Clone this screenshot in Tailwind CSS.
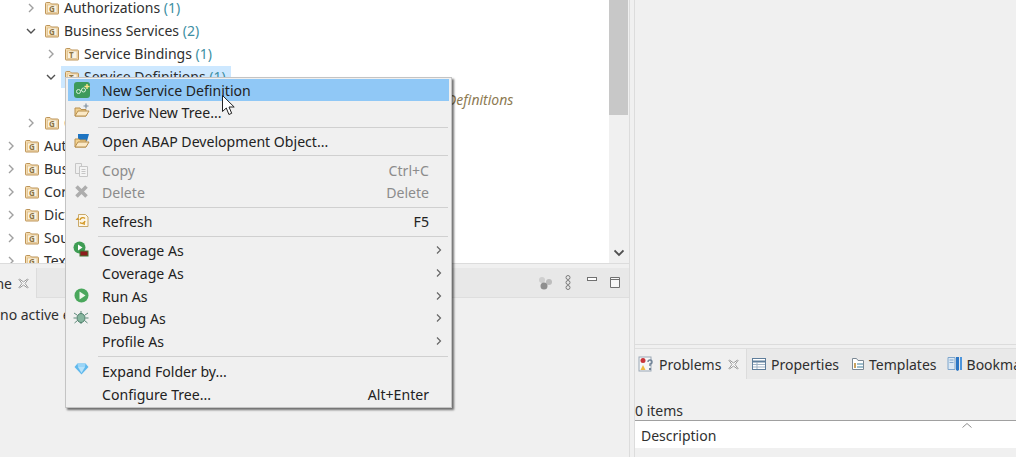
<!doctype html>
<html>
<head>
<meta charset="utf-8">
<script src="https://cdn.jsdelivr.net/npm/@tailwindcss/browser@4"></script>
</head>
<body class="m-0 overflow-hidden">
<svg width="0" height="0" class="absolute">
  <defs>
    <symbol id="f" viewBox="0 0 14 14">
      <path d="M.5 12.500V2.500q0-1 1-1h3.500l1.500 1.500h6q1 0 1 1v8.500q0 .5-.5.500H1q-.5 0-.5-.5z" fill="#f5dcae" stroke="#bd955a"/>
      <rect x="2.500" y="4" width="9.500" height="7.500" fill="#fbf3e2" stroke="#d6b581" stroke-width=".6"/>
    </symbol>
    <symbol id="cr" viewBox="0 0 10 10"><path d="M3 1l4 4-4 4" fill="none" stroke="#a0a0a0" stroke-width="1.400"/></symbol>
    <symbol id="cd" viewBox="0 0 10 10"><path d="M1 3l4 4 4-4" fill="none" stroke="#505050" stroke-width="1.400"/></symbol>
    <symbol id="m" viewBox="0 0 8 10"><path d="M2 1.500l3.500 3.500L2 8.500" fill="none" stroke="#666" stroke-width="1.200"/></symbol>
    <symbol id="x" viewBox="0 0 11 11"><path d="M1.500 1l4 3 4-3 .5.500-3 4 3 4-.5.500-4-3-4 3-.5-.5 3-4-3-4z" fill="#fff" stroke="#808080" stroke-width=".8"/></symbol>
  </defs>
</svg>
<div class="relative flex w-[1016px] h-[457px] overflow-hidden bg-[#f0f0f0] text-[14px] leading-[23px] text-[#2f2f2f] font-['Noto_Sans','Open_Sans',sans-serif]">

  <!-- left column -->
  <div class="w-[630px] shrink-0 h-full flex flex-col border-r border-[#dcdcdc]">
    <div class="flex h-[264px] shrink-0 border-b border-[#dcdcdc]">
      <div class="w-[609px] h-full bg-white overflow-hidden">
        <div class="-mt-[4px]">
          <div class="flex items-center h-[23px] pl-[26px]"><svg class="w-[10px] h-[10px] mr-[9px]"><use href="#cr"/></svg><span class="relative w-[14px] h-[14px] mr-[5px]"><svg class="w-[14px] h-[14px]"><use href="#f"/></svg><span class="absolute left-[4px] top-[3px] text-[8px] leading-[9px] font-bold text-[#8c7443]">G</span></span><span>Authorizations <span class="text-[#3d8fa3]">(1)</span></span></div>
          <div class="flex items-center h-[23px] pl-[26px]"><svg class="w-[10px] h-[10px] mr-[9px]"><use href="#cd"/></svg><span class="relative w-[14px] h-[14px] mr-[5px]"><svg class="w-[14px] h-[14px]"><use href="#f"/></svg><span class="absolute left-[4px] top-[3px] text-[8px] leading-[9px] font-bold text-[#8c7443]">G</span></span><span>Business Services <span class="text-[#3d8fa3]">(2)</span></span></div>
          <div class="flex items-center h-[23px] pl-[46px]"><svg class="w-[10px] h-[10px] mr-[9px]"><use href="#cr"/></svg><span class="relative w-[14px] h-[14px] mr-[5px]"><svg class="w-[14px] h-[14px]"><use href="#f"/></svg><span class="absolute left-[4px] top-[3px] text-[8px] leading-[9px] font-bold text-[#8c7443]">T</span></span><span>Service Bindings <span class="text-[#3d8fa3]">(1)</span></span></div>
          <div class="flex items-center h-[23px] pl-[46px]"><svg class="w-[10px] h-[10px] mr-[5px]"><use href="#cd"/></svg><span class="flex items-center h-[22px] w-[170px] bg-[#cde8ff] pl-[4px]"><span class="relative w-[14px] h-[14px] mr-[5px]"><svg class="w-[14px] h-[14px]"><use href="#f"/></svg><span class="absolute left-[4px] top-[3px] text-[8px] leading-[9px] font-bold text-[#8c7443]">T</span></span><span>Service Definitions <span class="text-[#3d8fa3]">(1)</span></span></span></div>
          <div class="flex items-center h-[23px] pl-[447px] italic text-[#8d7a52]">Definitions</div>
          <div class="flex items-center h-[23px] pl-[26px]"><svg class="w-[10px] h-[10px] mr-[9px]"><use href="#cr"/></svg><span class="relative w-[14px] h-[14px] mr-[5px]"><svg class="w-[14px] h-[14px]"><use href="#f"/></svg><span class="absolute left-[4px] top-[3px] text-[8px] leading-[9px] font-bold text-[#8c7443]">G</span></span><span>Core</span></div>
          <div class="flex items-center h-[23px] pl-[6px]"><svg class="w-[10px] h-[10px] mr-[9px]"><use href="#cr"/></svg><span class="relative w-[14px] h-[14px] mr-[5px]"><svg class="w-[14px] h-[14px]"><use href="#f"/></svg><span class="absolute left-[4px] top-[3px] text-[8px] leading-[9px] font-bold text-[#8c7443]">G</span></span><span>Authorizations</span></div>
          <div class="flex items-center h-[23px] pl-[6px]"><svg class="w-[10px] h-[10px] mr-[9px]"><use href="#cr"/></svg><span class="relative w-[14px] h-[14px] mr-[5px]"><svg class="w-[14px] h-[14px]"><use href="#f"/></svg><span class="absolute left-[4px] top-[3px] text-[8px] leading-[9px] font-bold text-[#8c7443]">G</span></span><span>Business</span></div>
          <div class="flex items-center h-[23px] pl-[6px]"><svg class="w-[10px] h-[10px] mr-[9px]"><use href="#cr"/></svg><span class="relative w-[14px] h-[14px] mr-[5px]"><svg class="w-[14px] h-[14px]"><use href="#f"/></svg><span class="absolute left-[4px] top-[3px] text-[8px] leading-[9px] font-bold text-[#8c7443]">G</span></span><span>Core</span></div>
          <div class="flex items-center h-[23px] pl-[6px]"><svg class="w-[10px] h-[10px] mr-[9px]"><use href="#cr"/></svg><span class="relative w-[14px] h-[14px] mr-[5px]"><svg class="w-[14px] h-[14px]"><use href="#f"/></svg><span class="absolute left-[4px] top-[3px] text-[8px] leading-[9px] font-bold text-[#8c7443]">G</span></span><span>Dictionary</span></div>
          <div class="flex items-center h-[23px] pl-[6px]"><svg class="w-[10px] h-[10px] mr-[9px]"><use href="#cr"/></svg><span class="relative w-[14px] h-[14px] mr-[5px]"><svg class="w-[14px] h-[14px]"><use href="#f"/></svg><span class="absolute left-[4px] top-[3px] text-[8px] leading-[9px] font-bold text-[#8c7443]">G</span></span><span>Source</span></div>
          <div class="flex items-center h-[23px] pl-[6px]"><svg class="w-[10px] h-[10px] mr-[9px]"><use href="#cr"/></svg><span class="relative w-[14px] h-[14px] mr-[5px]"><svg class="w-[14px] h-[14px]"><use href="#f"/></svg><span class="absolute left-[4px] top-[3px] text-[8px] leading-[9px] font-bold text-[#8c7443]">G</span></span><span>Texts</span></div>
        </div>
      </div>
      <div class="w-[20px] h-full flex flex-col bg-[#f0f0f0]">
        <div class="w-[19px] h-[115px] bg-[#c8c8c8]"></div>
        <div class="mt-auto mb-[5px] flex justify-center pr-[1px]"><svg width="10" height="10" viewBox="0 0 10 10"><path d="M.5 2.500L5 7l4.500-4.500" fill="none" stroke="#505050" stroke-width="1.800"/></svg></div>
      </div>
    </div>
    <div class="mt-[4px] h-[30px] shrink-0 flex bg-[#e8e8e8] border-b border-[#dedede]">
      <div class="w-[37px] h-[30px] shrink-0 bg-[#f0f0f0] border-r border-[#dcdcdc] flex items-center justify-end pr-[7px] overflow-hidden"><span class="mr-[6px]">ne</span><svg class="w-[11px] h-[11px] shrink-0"><use href="#x"/></svg></div>
      <div class="ml-auto flex items-center pr-[9px]">
        <svg width="16" height="16" viewBox="0 0 16 16" class="mr-[12px]"><circle cx="5" cy="5" r="3" fill="#cfcfcf"/><circle cx="12" cy="7" r="3" fill="#bdbdbd"/><circle cx="7" cy="11" r="3.500" fill="#8f8f8f"/></svg>
        <svg width="6" height="15" viewBox="0 0 6 15" class="mr-[16px]"><g fill="none" stroke="#7c7c7c"><circle cx="3" cy="2.500" r="2"/><circle cx="3" cy="7.500" r="2"/><circle cx="3" cy="12.500" r="2"/></g></svg>
        <svg width="10" height="5" viewBox="0 0 10 5" class="mr-[13px] mb-[6px]"><rect x=".5" y=".5" width="9" height="3" fill="#fff" stroke="#707070"/></svg>
        <svg width="10" height="11" viewBox="0 0 10 11"><path d="M.5.500h9v10h-9zM.5 2.500h9" fill="#f7f7f7" stroke="#707070"/></svg>
      </div>
    </div>
    <div class="h-[28px] flex items-end whitespace-nowrap">no active editor</div>
  </div>

  <!-- right column -->
  <div class="ml-[4px] flex-1 min-w-0 h-full flex flex-col border-l border-[#dcdcdc] overflow-hidden">
    <div class="h-[345px] shrink-0 border-b border-[#dcdcdc]"></div>
    <div class="mt-[3px] h-[31px] shrink-0 flex items-stretch bg-[#e9e9e9] border-t border-[#dfdfdf] whitespace-nowrap">
      <div class="w-[112px] shrink-0 bg-[#f0f0f0] border-r border-[#dcdcdc] flex items-center pl-[3px]">
        <svg width="16" height="16" viewBox="0 0 16 16" class="mr-[5px] shrink-0"><rect x="1" y="1" width="12" height="14" fill="#f6f6f6" stroke="#9aa7b5"/><circle cx="5" cy="4.500" r="2.500" fill="#c9343a"/><path d="M2.500 14l2.500-5 2.500 5z" fill="#eeb93f"/><path d="M10 6a2 2 0 1 1 2 2v2" fill="none" stroke="#6f8296" stroke-width="1.400"/><path d="M11 12h2v2h-2z" fill="#6f8296"/></svg>
        <span>Problems</span>
        <svg class="w-[11px] h-[11px] ml-[7px] shrink-0"><use href="#x"/></svg>
      </div>
      <div class="flex items-center ml-[5px] shrink-0">
        <svg width="14" height="12" viewBox="0 0 14 12" class="mr-[5px]"><rect x=".5" y=".5" width="13" height="11" fill="#fff" stroke="#5f7e9b"/><path d="M.5 3.500h13" stroke="#5f7e9b" stroke-width="2"/><path d="M1 6.500h12M1 9h12M5 4v7" stroke="#9fb2c4"/></svg>
        <span>Properties</span>
      </div>
      <div class="flex items-center ml-[12px] shrink-0">
        <svg width="14" height="14" viewBox="0 0 14 14" class="mr-[4px]"><path d="M1.500 1.500h4l1.500 2h5.500v9h-11z" fill="#fff" stroke="#7b8894"/><path d="M6 7h6M6 10h6" stroke="#3f7f9c"/><rect x="3" y="6" width="2" height="5" fill="#c9a25f"/></svg>
        <span>Templates</span>
      </div>
      <div class="flex items-center ml-[10px] shrink-0">
        <svg width="16" height="16" viewBox="0 0 16 16" class="mr-[4px]"><path d="M1 1.500h7v12H1z" fill="#dbe8f4" stroke="#7fa6cc"/><path d="M2.500 4h4M2.500 6.500h4" stroke="#7fa6cc"/><path d="M9 1h3v13l-1.500 1L9 14z" fill="#2c76c4"/><path d="M13 1h2v13h-2z" fill="#4c95dc"/></svg>
        <span>Bookmarks</span>
      </div>
    </div>
    <div class="h-[41px] shrink-0 flex items-end leading-[18px] bg-[#f0f0f0]">0 items</div>
    <div class="relative h-[28px] shrink-0 bg-white border-t border-[#a0a0a0] flex items-center pl-[6px] pt-[1px]">
      Description
      <svg width="10" height="5" viewBox="0 0 10 5" class="absolute left-[327px] top-[2px]"><path d="M.5 4.500L5 .5l4.500 4" fill="none" stroke="#8e8e8e"/></svg>
    </div>
  </div>

  <!-- context menu -->
  <div class="absolute left-[65px] top-[77px] w-[387px] h-[331px] bg-[#f0f0f0] border border-[#c4c4c4] shadow-[2px_2px_2px_rgba(0,0,0,0.55)] pl-[2px] pr-[2px] pt-[1px] text-[14.1px] text-[#222]">
    <div class="relative flex items-center h-[22px] bg-[#90c8f6] pl-[34px]">
      <svg width="16" height="16" viewBox="0 0 16 16" class="absolute left-[6px] top-[3px]"><rect width="16" height="16" rx="3" fill="#3d9a5a"/><circle cx="4.500" cy="9.500" r="2" fill="none" stroke="#d6f0d8"/><circle cx="9.500" cy="8" r="2" fill="none" stroke="#d6f0d8"/><path d="M6.500 9l1-.5" stroke="#d6f0d8"/><path d="M13 2v5M10.500 4.500h5" stroke="#ffe38a" stroke-width="1.400"/></svg>
      New Service Definition
    </div>
    <div class="relative flex items-center h-[23px] pl-[34px]">
      <svg width="16" height="15" viewBox="0 0 16 15" class="absolute left-[6px] top-[2px]"><path d="M1 13V5h5l1 1.500h5V13z" fill="#f0cf8e" stroke="#b78f4f"/><path d="M1 13l3-5h11l-3 5z" fill="#fbe9c6" stroke="#b78f4f"/><path d="M12 .500v5M9.500 3h5" stroke="#7d8fa0" stroke-width="1.200"/></svg>
      Derive New Tree...
    </div>
    <div class="h-[6px] flex items-center ml-[30px] mr-[1px]"><div class="w-full border-t border-[#d0d0d0]"></div></div>
    <div class="relative flex items-center h-[22px] pl-[34px]">
      <svg width="16" height="15" viewBox="0 0 16 15" class="absolute left-[6px] top-[3px]"><path d="M4 1h11l-2 7H4z" fill="#1d74c2"/><path d="M1 14V6h4l1 1h6v7z" fill="#f4d28f" stroke="#b78f4f"/><path d="M1 14l3-5h11l-3 5z" fill="#fbe9c6" stroke="#b78f4f"/></svg>
      Open ABAP Development Object...
    </div>
    <div class="h-[7px] flex items-center ml-[30px] mr-[1px]"><div class="w-full border-t border-[#d0d0d0]"></div></div>
    <div class="relative flex items-center h-[22px] pl-[34px] pr-[20px] text-[#8c8c8c]">
      <svg width="15" height="15" viewBox="0 0 15 15" class="absolute left-[6px] top-[3px]"><path d="M1.500 1.500h6v10h-6z" fill="#efefef" stroke="#c6c6c6"/><path d="M5.500 4.500h8v10h-8z" fill="#f4f4f4" stroke="#c6c6c6"/><path d="M7.500 7.500h4M7.500 9.500h4M7.500 11.500h4" stroke="#c6c6c6"/></svg>
      <span>Copy</span><span class="ml-auto">Ctrl+C</span>
    </div>
    <div class="relative flex items-center h-[23px] pl-[34px] pr-[20px] text-[#8c8c8c]">
      <svg width="15" height="15" viewBox="0 0 15 15" class="absolute left-[6px] top-[3px]"><path d="M2.500 2.500l10 10M12.500 2.500l-10 10" stroke="#adadad" stroke-width="3.600"/></svg>
      <span>Delete</span><span class="ml-auto">Delete</span>
    </div>
    <div class="h-[6px] flex items-center ml-[30px] mr-[1px]"><div class="w-full border-t border-[#d0d0d0]"></div></div>
    <div class="relative flex items-center h-[23px] pl-[34px] pr-[20px]">
      <svg width="15" height="15" viewBox="0 0 15 15" class="absolute left-[7px] top-[3px]"><path d="M3.500 1.500h7l2.500 2.500v9.500h-9.500z" fill="#fdf6e6" stroke="#c9a96a"/><path d="M5 7a3 3 0 0 1 5-1.500M10 8a3 3 0 0 1-5 1.500" fill="none" stroke="#d49a2a" stroke-width="1.400"/><path d="M.5 7l2-2.500L4.500 7zM7 11l3-1v2z" fill="#d49a2a"/></svg>
      <span>Refresh</span><span class="ml-auto">F5</span>
    </div>
    <div class="h-[6px] flex items-center ml-[30px] mr-[1px]"><div class="w-full border-t border-[#d0d0d0]"></div></div>
    <div class="relative flex items-center h-[23px] pl-[34px]">
      <svg width="16" height="16" viewBox="0 0 16 16" class="absolute left-[5px] top-[2px]"><circle cx="6.500" cy="6.500" r="6" fill="#3f9d54"/><path d="M5 3.500l4.500 3-4.500 3z" fill="#fff"/><rect x="7" y="10" width="8" height="5" fill="#8d1d1d" stroke="#3e7a34"/></svg>
      <span>Coverage As</span>
      <svg class="absolute left-[367px] top-[6px] w-[8px] h-[10px]"><use href="#m"/></svg>
    </div>
    <div class="relative flex items-center h-[23px] pl-[34px]">
      <span>Coverage As</span>
      <svg class="absolute left-[367px] top-[6px] w-[8px] h-[10px]"><use href="#m"/></svg>
    </div>
    <div class="relative flex items-center h-[22px] pl-[34px]">
      <svg width="15" height="15" viewBox="0 0 15 15" class="absolute left-[6px] top-[3px]"><circle cx="7.500" cy="7.500" r="7" fill="#4aa75c"/><path d="M5.500 3.500l6 4-6 4z" fill="#eef8ea"/></svg>
      <span>Run As</span>
      <svg class="absolute left-[367px] top-[6px] w-[8px] h-[10px]"><use href="#m"/></svg>
    </div>
    <div class="relative flex items-center h-[23px] pl-[34px]">
      <svg width="16" height="15" viewBox="0 0 16 15" class="absolute left-[5px] top-[3px]"><path d="M8 1v13M1 3l3 2M15 3l-3 2M.500 8h3M15.500 8h-3M1.500 13l3-2.500M14.500 13l-3-2.500" stroke="#5e8a7a"/><ellipse cx="8" cy="8" rx="4" ry="4.500" fill="#86b59e" stroke="#4f7f6c"/></svg>
      <span>Debug As</span>
      <svg class="absolute left-[367px] top-[6px] w-[8px] h-[10px]"><use href="#m"/></svg>
    </div>
    <div class="relative flex items-center h-[23px] pl-[34px]">
      <span>Profile As</span>
      <svg class="absolute left-[367px] top-[6px] w-[8px] h-[10px]"><use href="#m"/></svg>
    </div>
    <div class="h-[7px] flex items-center ml-[30px] mr-[1px]"><div class="w-full border-t border-[#d0d0d0]"></div></div>
    <div class="relative flex items-center h-[23px] pl-[34px]">
      <svg width="15" height="12" viewBox="0 0 15 12" class="absolute left-[6px] top-[3px]"><path d="M3.500.500h8l3 3.500-7 7.500L.5 4z" fill="#5fb8ec"/><path d="M4 4h7l-3.500 6z" fill="#b7e2fa"/><path d="M3.500.500h8L11 4H4z" fill="#9ad5f7"/></svg>
      <span>Expand Folder by...</span>
    </div>
    <div class="relative flex items-center h-[23px] pl-[34px] pr-[20px]">
      <span>Configure Tree...</span><span class="ml-auto">Alt+Enter</span>
    </div>
  </div>

  <!-- mouse pointer -->
  <svg width="14" height="21" viewBox="0 0 14 21" class="absolute left-[222px] top-[95px]"><path d="M.5.500v16l3.800-3.500 2.600 6.500 2.800-1.200-2.700-6.300h5.200z" fill="#fff" stroke="#222"/></svg>
</div>
</body>
</html>
